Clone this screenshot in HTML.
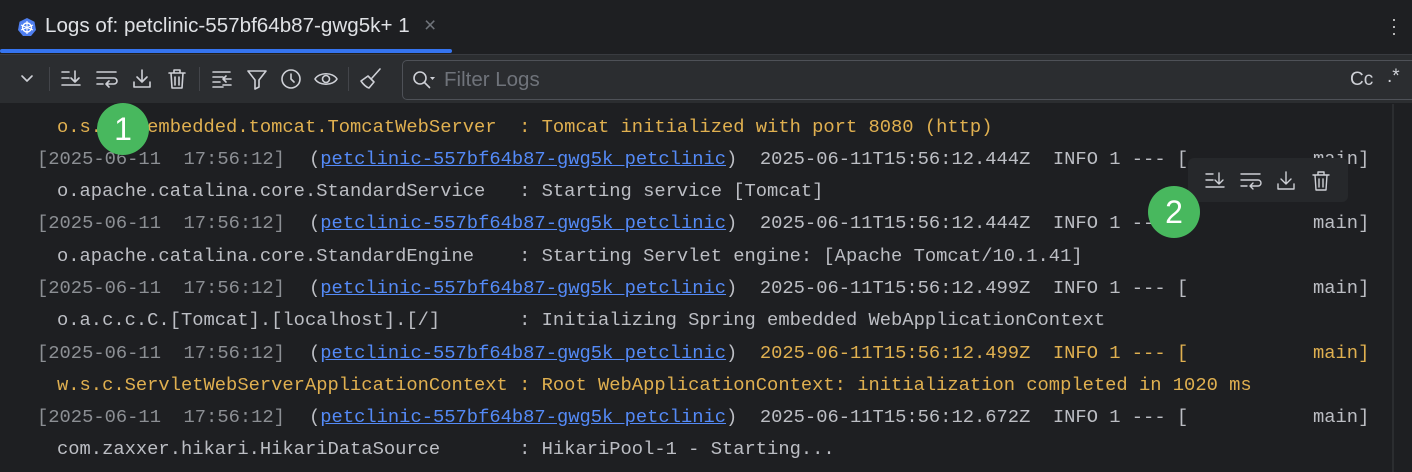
<!DOCTYPE html>
<html><head><meta charset="utf-8"><style>
body{margin:0;width:1412px;height:472px;background:#1e1f22;overflow:hidden;position:relative;font-family:"Liberation Sans",sans-serif}
.tabbar{position:absolute;left:0;top:0;width:1412px;height:54px;background:#1e1f22;border-bottom:1px solid #393b40}
.tabline{position:absolute;left:0;top:49px;width:452px;height:4px;background:#3574f0;border-radius:2px}
.tabtitle{position:absolute;left:45px;top:14px;font-size:20.6px;color:#dfe1e5}
.close{position:absolute;left:424px;top:14px;color:#6f737a;font-size:21px}
.kdots{position:absolute;left:1391px;top:16px;color:#ccc;font-size:18px;line-height:7px}
.tool{position:absolute;left:0;top:55px;width:1412px;height:48px;background:#2b2d30}
.sep{position:absolute;top:67px;width:1px;height:24px;background:#43454a}
.search{position:absolute;left:402px;top:60px;width:1020px;height:38px;border:1px solid #4e5157;border-radius:5px;background:#2b2d30}
.ph{position:absolute;left:444px;top:68px;font-size:20.5px;color:#6f737a}
svg.i{position:absolute;fill:none;stroke:#ced0d6;stroke-width:1.6;stroke-linecap:round;stroke-linejoin:round}
.t{position:absolute;font-family:"Liberation Mono",monospace;font-size:18.8px;white-space:pre;color:#bcbec4;line-height:22px}
.g{color:#8c8f94}.o{color:#e0b050}.l{color:#548af7;text-decoration:underline}
.badge{position:absolute;border-radius:50%;background:#48b85e;color:#fff;font-size:32px;text-align:center}
.pop{position:absolute;left:1188px;top:158px;width:160px;height:44px;background:#26282b;border-radius:6px}
.scroll{position:absolute;left:1392px;top:104px;width:2px;height:368px;background:#2b2d30}
</style></head><body>
<div class="tabbar"></div>
<svg style="position:absolute;left:17px;top:17px" width="20" height="20" viewBox="0 0 20 20"><polygon points="10,1 17.5,4.8 19,13 14,19 6,19 1,13 2.5,4.8" fill="#4f7ff0"/><circle cx="10" cy="10.5" r="4.5" fill="none" stroke="#fff" stroke-width="1.4"/><path d="M10 4v13M4 8l12 5M16 8L4 13" stroke="#fff" stroke-width="1.1"/></svg>
<div class="tabtitle">Logs of: petclinic-557bf64b87-gwg5k+ 1</div>
<div class="close">×</div>
<div class="tabline"></div>
<div class="kdots">·<br>·<br>·</div>
<div class="tool"></div>
<svg class="i" style="left:19px;top:70px" width="16" height="16"><path d="M3 6l5 5 5-5"/></svg>
<div class="sep" style="left:49px"></div>
<svg class="i" style="left:60px;top:68px" width="22" height="22"><path d="M2 4h7M2 10h7M2 17h18M15 3v11M11 10l4 4 4-4"/></svg>
<svg class="i" style="left:95px;top:68px" width="24" height="22"><path d="M2 4h19M2 10h17a3 3 0 0 1 0 6h-7M14 13l-3 3 3 3M2 16h6"/></svg>
<svg class="i" style="left:131px;top:68px" width="22" height="22"><path d="M11 2v12M6 9l5 5 5-5M3 14v5h16v-5"/></svg>
<svg class="i" style="left:166px;top:67px" width="22" height="24"><path d="M3 6h16M8 6V3h6v3M5 6l1 15h10l1-15M9 10v8M13 10v8"/></svg>
<div class="sep" style="left:199px"></div>
<svg class="i" style="left:211px;top:68px" width="22" height="22"><path d="M2 4h17M2 9h10M2 14h7M2 19h10M20 11h-8M15 8l-3 3 3 3M12 17h8"/></svg>
<svg class="i" style="left:246px;top:68px" width="22" height="22"><path d="M2 3h18l-7 9v7l-4 2v-9z"/></svg>
<svg class="i" style="left:280px;top:68px" width="22" height="22"><circle cx="11" cy="11" r="9"/><path d="M11 6v5l3 3"/></svg>
<svg class="i" style="left:314px;top:69px" width="24" height="20"><path d="M1 10c4-7 18-7 22 0-4 7-18 7-22 0z"/><circle cx="12" cy="10" r="3.5"/></svg>
<div class="sep" style="left:348px"></div>
<svg class="i" style="left:359px;top:67px" width="24" height="24"><path d="M21 2l-8 9M9 9l6 6-5 6c-3-1-6-4-8-7z"/></svg>
<div class="search"></div>
<svg class="i" style="left:411px;top:69px" width="26" height="22"><circle cx="9" cy="9" r="6"/><path d="M13.5 13.5l5 5"/><path d="M19 8h5l-2.5 3z" fill="#ced0d6" stroke="none"/></svg>
<div class="ph">Filter Logs</div>
<div style="position:absolute;left:1350px;top:69px;color:#ced0d6;font-size:19px">Cc</div>
<div style="position:absolute;left:1387px;top:66px;color:#ced0d6;font-size:19px">.*</div>

<div class="scroll"></div>
<div class="t o" style="left:57px;top:116px">o.s.b.w.embedded.tomcat.TomcatWebServer  : Tomcat initialized with port 8080 (http)</div>

<div class="t g" style="left:37px;top:148px">[2025-06-11  17:56:12]</div><div class="t" style="left:309px;top:148px">(<span class="l">petclinic-557bf64b87-gwg5k petclinic</span>)  2025-06-11T15:56:12.444Z  INFO 1 --- [</div><div class="t" style="left:1313px;top:148px">main]</div>
<div class="t" style="left:57px;top:180px">o.apache.catalina.core.StandardService   : Starting service [Tomcat]</div>

<div class="t g" style="left:37px;top:212px">[2025-06-11  17:56:12]</div><div class="t" style="left:309px;top:212px">(<span class="l">petclinic-557bf64b87-gwg5k petclinic</span>)  2025-06-11T15:56:12.444Z  INFO 1 --- [</div><div class="t" style="left:1313px;top:212px">main]</div>
<div class="t" style="left:57px;top:245px">o.apache.catalina.core.StandardEngine    : Starting Servlet engine: [Apache Tomcat/10.1.41]</div>

<div class="t g" style="left:37px;top:277px">[2025-06-11  17:56:12]</div><div class="t" style="left:309px;top:277px">(<span class="l">petclinic-557bf64b87-gwg5k petclinic</span>)  2025-06-11T15:56:12.499Z  INFO 1 --- [</div><div class="t" style="left:1313px;top:277px">main]</div>
<div class="t" style="left:57px;top:309px">o.a.c.c.C.[Tomcat].[localhost].[/]       : Initializing Spring embedded WebApplicationContext</div>

<div class="t g" style="left:37px;top:342px">[2025-06-11  17:56:12]</div><div class="t" style="left:309px;top:342px">(<span class="l">petclinic-557bf64b87-gwg5k petclinic</span>)  <span class="o">2025-06-11T15:56:12.499Z  INFO 1 --- [</span></div><div class="t o" style="left:1313px;top:342px">main]</div>
<div class="t o" style="left:57px;top:374px">w.s.c.ServletWebServerApplicationContext : Root WebApplicationContext: initialization completed in 1020 ms</div>

<div class="t g" style="left:37px;top:406px">[2025-06-11  17:56:12]</div><div class="t" style="left:309px;top:406px">(<span class="l">petclinic-557bf64b87-gwg5k petclinic</span>)  2025-06-11T15:56:12.672Z  INFO 1 --- [</div><div class="t" style="left:1313px;top:406px">main]</div>
<div class="t" style="left:57px;top:438px">com.zaxxer.hikari.HikariDataSource       : HikariPool-1 - Starting...</div>

<div class="pop"></div>
<svg class="i" style="left:1204px;top:170px;stroke-width:1.4" width="22" height="22"><path d="M2 4h7M2 10h7M2 17h18M15 3v11M11 10l4 4 4-4"/></svg>
<svg class="i" style="left:1239px;top:170px;stroke-width:1.4" width="24" height="22"><path d="M2 4h19M2 10h17a3 3 0 0 1 0 6h-7M14 13l-3 3 3 3M2 16h6"/></svg>
<svg class="i" style="left:1275px;top:170px;stroke-width:1.4" width="22" height="22"><path d="M11 2v12M6 9l5 5 5-5M3 14v5h16v-5"/></svg>
<svg class="i" style="left:1310px;top:169px;stroke-width:1.4" width="22" height="24"><path d="M3 6h16M8 6V3h6v3M5 6l1 15h10l1-15M9 10v8M13 10v8"/></svg>

<div class="badge" style="left:97px;top:103px;width:52px;height:52px;line-height:52px">1</div>
<div class="badge" style="left:1148px;top:186px;width:52px;height:52px;line-height:52px">2</div>
</body></html>
